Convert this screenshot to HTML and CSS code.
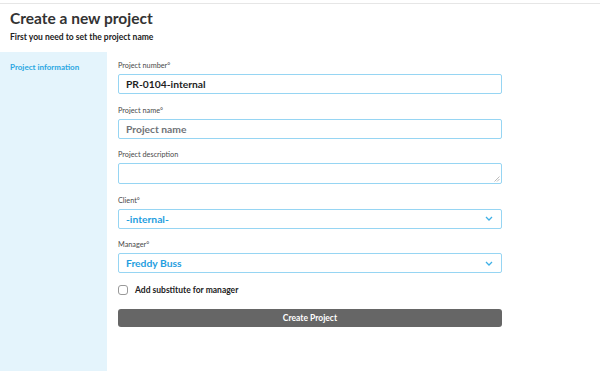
FILE: index.html
```html
<!DOCTYPE html>
<html>
<head>
<meta charset="utf-8">
<link rel="stylesheet" href="styles.css">
</head>
<body>
<div class="page">
  <header class="header">
    <h1 class="title">Create a new project</h1>
    <p class="subtitle">First you need to set the project name</p>
  </header>
  <div class="main">
    <aside class="sidebar">
      <div class="side-item">Project information</div>
    </aside>
    <form class="form">
      <div class="field">
        <label class="label">Project number°</label>
        <div class="input value">PR-0104-internal</div>
      </div>
      <div class="field">
        <label class="label">Project name°</label>
        <div class="input placeholder">Project name</div>
      </div>
      <div class="field">
        <label class="label">Project description</label>
        <div class="input textarea">
          <svg class="grip" width="6" height="6" viewBox="0 0 6 6"><path d="M5.5 0.5 L0.5 5.5 M5.5 3 L3 5.5" stroke="#aaa" stroke-width="0.8" fill="none"/></svg>
        </div>
      </div>
      <div class="field">
        <label class="label">Client°</label>
        <div class="input select"><span>-internal-</span>
          <svg class="chev" width="8" height="5" viewBox="0 0 8 5"><path d="M1 1 L4 4 L7 1" stroke="#3fb0e6" stroke-width="1.3" fill="none"/></svg>
        </div>
      </div>
      <div class="field">
        <label class="label">Manager°</label>
        <div class="input select"><span>Freddy Buss</span>
          <svg class="chev" width="8" height="5" viewBox="0 0 8 5"><path d="M1 1 L4 4 L7 1" stroke="#3fb0e6" stroke-width="1.3" fill="none"/></svg>
        </div>
      </div>
      <div class="check-row">
        <span class="checkbox"></span>
        <span class="check-label">Add substitute for manager</span>
      </div>
      <div class="button">Create Project</div>
    </form>
  </div>
</div>
</body>
</html>
```
FILE: styles.css
```css
html, body {
  margin: 0;
  padding: 0;
  background: #fff;
}
body {
  font-family: Lato, "Noto Sans", sans-serif;
  color: #333;
}
.page {
  width: 600px;
  height: 371px;
  overflow: hidden;
  border-top: 1px solid #e6e6e6;
  margin-top: 3px;
  box-sizing: border-box;
}
.header {
  padding: 4px 10px 0 10px;
  height: 48px;
  box-sizing: border-box;
}
.title {
  margin: 0;
  font-size: 15.5px;
  font-weight: 700;
  line-height: 20px;
  color: #333;
}
.subtitle {
  margin: 3px 0 0 0;
  font-size: 8.5px;
  font-weight: 700;
  line-height: 12px;
  color: #222;
}
.main {
  display: flex;
  height: 320px;
}
.sidebar {
  width: 107px;
  background: #e4f4fc;
  padding: 9px 10px;
  box-sizing: border-box;
}
.side-item {
  font-size: 8px;
  font-weight: 700;
  color: #2aa7e2;
  line-height: 12px;
}
.form {
  width: 384px;
  margin-left: 11px;
  padding-top: 9px;
  display: flex;
  flex-direction: column;
}
.field {
  display: flex;
  flex-direction: column;
  margin-bottom: 11.5px;
}
.label {
  font-size: 7.3px;
  color: #4a4a4a;
  line-height: 10px;
  height: 10px;
  margin-bottom: 3px;
  font-weight: 400;
}
.input {
  height: 20px;
  border: 1.5px solid #96d5f3;
  border-radius: 2px;
  box-sizing: border-box;
  padding: 0 7px;
  display: flex;
  align-items: center;
  font-size: 10.3px;
  font-weight: 700;
}
.value {
  color: #1f1f1f;
}
.placeholder {
  color: #6f7378;
}
.textarea {
  height: 21px;
  position: relative;
}
.grip {
  position: absolute;
  right: 1px;
  bottom: 1px;
}
.select {
  justify-content: space-between;
  color: #1f9ee0;
  padding-right: 8px;
}
.check-row {
  display: flex;
  align-items: center;
  height: 10px;
  margin-top: 0.5px;
}
.checkbox {
  width: 8px;
  height: 8px;
  border: 1px solid #999;
  border-radius: 3px;
  background: #fff;
}
.check-label {
  margin-left: 7px;
  font-size: 8.5px;
  font-weight: 700;
  color: #222;
}
.button {
  margin-top: 14px;
  height: 18px;
  background: #666;
  border-radius: 3px;
  color: #fff;
  font-size: 8.5px;
  font-weight: 700;
  display: flex;
  align-items: center;
  justify-content: center;
}
```
